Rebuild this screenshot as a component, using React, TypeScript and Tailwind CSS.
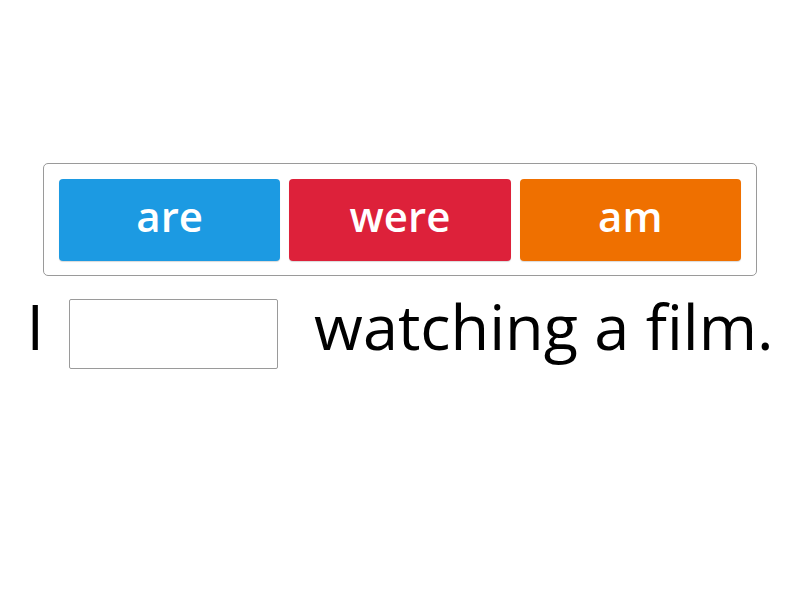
import React from "react";

const options = [
  { label: "are", bg: "bg-[#1c9ae2]" },
  { label: "were", bg: "bg-[#dd213a]" },
  { label: "am", bg: "bg-[#ef7000]" },
];

const App = () => {
  return (
    <div className="w-[800px] h-[600px] bg-white flex flex-col items-center font-['Open_Sans',sans-serif]">
      <div className="mt-[163px] w-[714px] h-[113px] border border-[#9a9a9a] rounded-[5px] flex gap-[9px] p-[15px]">
        {options.map((opt, i) => (
          <div
            key={i}
            className={`flex-1 h-[82px] rounded-[4px] ${opt.bg} flex items-center justify-center pb-[8px] text-white text-[42px] font-semibold leading-none shadow-[0_1px_1px_rgba(0,0,0,0.15)]`}
          >
            {opt.label}
          </div>
        ))}
      </div>

      <div className="flex items-center mt-[18px] text-[63px] text-black leading-none">
        <span className="pb-[16px]">I</span>
        <div className="ml-[25px] mr-[36px] w-[209px] h-[70px] border border-[#9a9a9a] rounded-[2px] bg-white" />
        <span className="pb-[16px]">watching a film.</span>
      </div>
    </div>
  );
};

export default App;
